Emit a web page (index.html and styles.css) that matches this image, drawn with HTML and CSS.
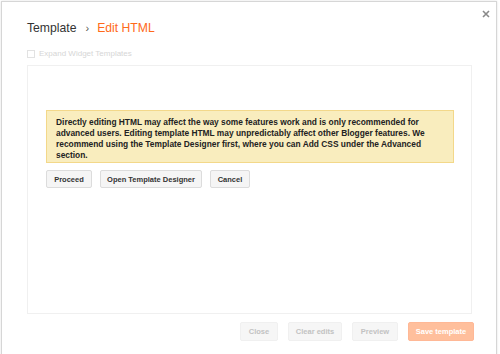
FILE: index.html
```html
<!DOCTYPE html>
<html>
<head>
<meta charset="utf-8">
<link rel="stylesheet" href="styles.css">
</head>
<body>
<div class="dialog">
  <button class="close-x" aria-label="Close">
    <svg width="8" height="8" viewBox="0 0 8 8"><path d="M1 1L7 7M7 1L1 7" stroke="#8a8a8a" stroke-width="1.6"/></svg>
  </button>
  <h1 class="title"><span class="crumb">Template</span><span class="sep">›</span><span class="current">Edit HTML</span></h1>
  <label class="expand"><span class="cb"></span>Expand Widget Templates</label>
  <div class="editor">
    <div class="warning">Directly editing HTML may affect the way some features work and is only recommended for advanced users. Editing template HTML may unpredictably affect other Blogger features. We recommend using the Template Designer first, where you can Add CSS under the Advanced section.</div>
    <div class="actions">
      <button class="btn">Proceed</button>
      <button class="btn">Open Template Designer</button>
      <button class="btn">Cancel</button>
    </div>
  </div>
  <div class="footer">
    <button class="fbtn">Close</button>
    <button class="fbtn">Clear edits</button>
    <button class="fbtn">Preview</button>
    <button class="fbtn save">Save template</button>
  </div>
</div>
</body>
</html>
```
FILE: styles.css
```css
html, body { margin: 0; padding: 0; background: #fff; }
body { font-family: "Liberation Sans", Arial, sans-serif; width: 500px; height: 354px; overflow: hidden; }
.dialog {
  position: relative;
  box-sizing: border-box;
  margin: 1px 0 0 1px;
  width: 496px;
  height: 360px;
  border: 1px solid #d6d6d6;
  box-shadow: 0 0 2px rgba(0,0,0,0.12);
  background: #fff;
  padding: 19px 24px 0 25px;
}
.close-x {
  position: absolute; top: 8px; right: 6px;
  border: 0; background: none; padding: 0; width: 8px; height: 8px; display: block;
}
.close-x svg { display: block; }
.title { margin: 0; font-weight: normal; font-size: 12.2px; line-height: 15px; display: flex; align-items: baseline; }
.crumb { color: #333; }
.sep { color: #555; margin: 0 8px 0 9px; font-size: 11px; }
.current { color: #ff6a1a; }
.expand { display: flex; align-items: center; margin-top: 13px; font-size: 8px; line-height: 10px; color: #d6d6d6; height: 10px; }
.cb { width: 6px; height: 6px; border: 1px solid #e2e2e2; margin-right: 4px; display: inline-block; }
.editor {
  margin-top: 6px;
  height: 249px;
  border: 1px solid #f0f0f0;
  box-sizing: border-box;
  padding: 44px 17px 0 18px;
}
.warning {
  background: #f9edbe;
  border: 1px solid #f3d88a;
  padding: 6px 9px 5px 9px;
  font-weight: bold;
  font-size: 8.4px;
  line-height: 11px;
  color: #222;
  height: 53px;
  box-sizing: border-box;
}
.actions { display: flex; gap: 8px; margin-top: 7px; }
.btn {
  font-family: "Liberation Sans", Arial, sans-serif;
  height: 18px; box-sizing: border-box;
  border: 1px solid #dcdcdc; border-radius: 2px;
  background: #f5f5f5; color: #333;
  font-weight: bold; font-size: 7.5px; padding: 0;
  white-space: nowrap;
}
.btn:nth-child(1) { width: 46px; }
.btn:nth-child(2) { width: 102px; }
.btn:nth-child(3) { width: 40px; }
.footer { display: flex; justify-content: flex-end; gap: 10px; margin-top: 8px; margin-right: -2px; }
.fbtn {
  font-family: "Liberation Sans", Arial, sans-serif;
  height: 19px; box-sizing: border-box;
  border: 1px solid #f0f0f0; border-radius: 2px;
  background: #f6f6f6; color: #c2c2c2;
  font-weight: bold; font-size: 7.5px; padding: 0;
  white-space: nowrap;
}
.fbtn:nth-child(1) { width: 38px; }
.fbtn:nth-child(2) { width: 54px; }
.fbtn:nth-child(3) { width: 46px; }
.fbtn.save { width: 66px; background: #ffbf9c; border-color: #ffb896; color: #fff; }
```
